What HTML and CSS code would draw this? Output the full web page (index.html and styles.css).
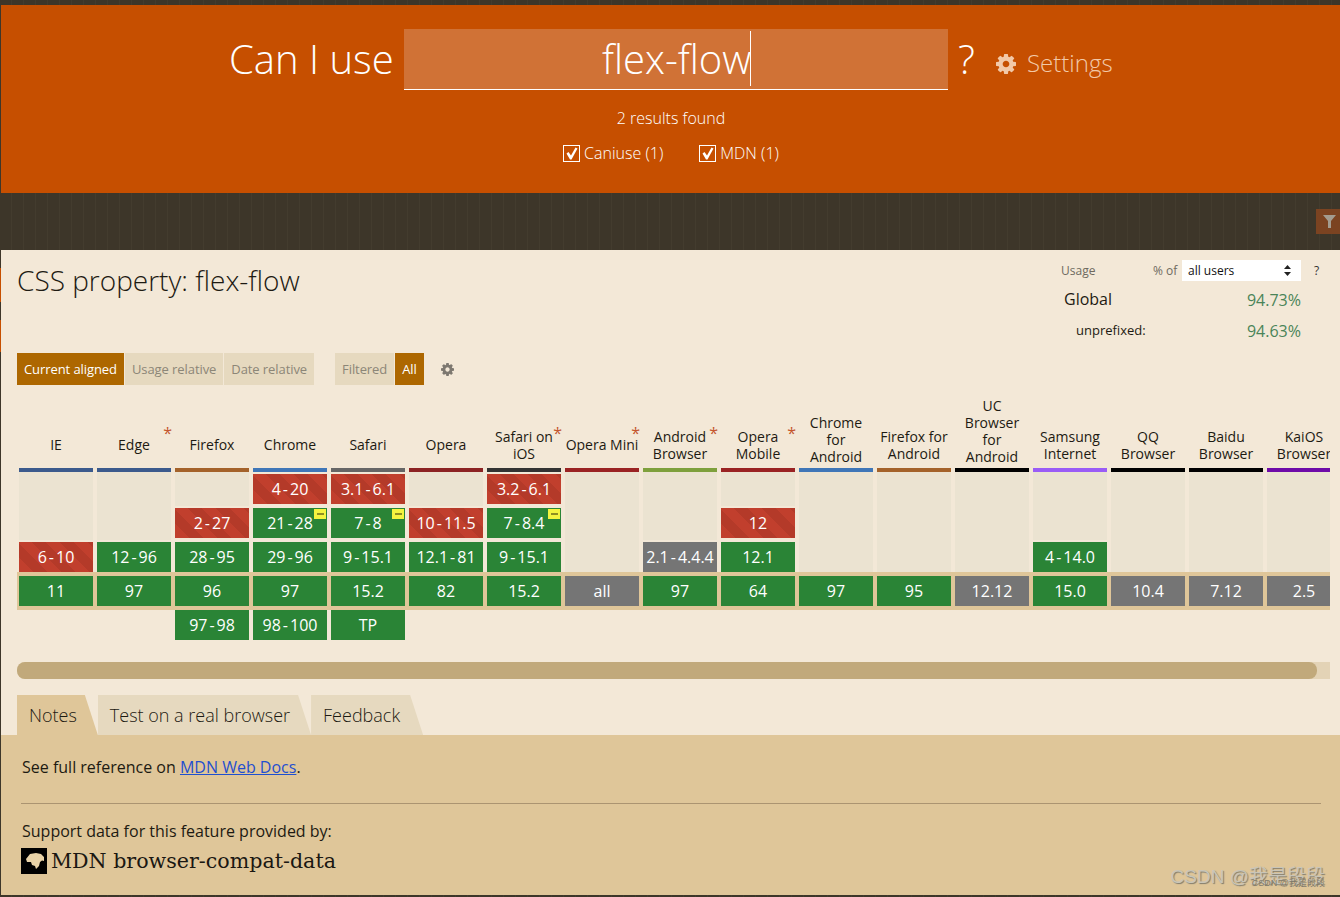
FILE: index.html
```html
<!DOCTYPE html>
<html lang="en">
<head>
<meta charset="utf-8">
<title>Can I use flex-flow</title>
<link rel="stylesheet" href="styles.css">
</head>
<body>
<div class="page">
  <header class="masthead">
    <div class="search-row">
      <h1 class="brand">Can I use</h1>
      <div class="search-box"><span class="search-text">flex-flow</span><span class="caret"></span></div>
      <span class="help">?</span>
      <a class="settings">
        <svg class="gear-lg" viewBox="128 128 1536 1536"><path d="M1152 896q0-106-75-181t-181-75-181 75-75 181 75 181 181 75 181-75 75-181zm512-109v222q0 12-8 23t-20 13l-185 28q-19 54-39 91 35 50 107 138 10 12 10 25t-9 23q-27 37-99 108t-94 71q-12 0-26-9l-138-108q-44 23-91 38-16 136-29 186-7 28-36 28h-222q-14 0-24.500-8.500t-11.500-21.500l-28-184q-49-16-90-37l-141 107q-10 9-25 9-14 0-25-11-126-114-165-168-7-10-7-23 0-12 8-23 15-21 51-66.500t54-70.500q-27-50-41-99l-183-27q-13-2-21-12.500t-8-23.500v-222q0-12 8-23t19-13l186-28q14-46 39-92-40-57-107-138-10-12-10-24 0-10 9-23 26-36 98.500-107.500t94.500-71.500q13 0 26 10l138 107q44-23 91-38 16-136 29-186 7-28 36-28h222q14 0 24.500 8.500t11.500 21.500l28 184q49 16 90 37l142-107q9-9 24-9 13 0 25 10 129 119 165 170 7 8 7 22 0 12-8 23-15 21-51 66.500t-54 70.500q26 50 41 98l183 28q13 2 21 12.500t8 23.500z"/></svg>
        <span class="settings-text">Settings</span>
      </a>
    </div>
    <p class="results">2 results found</p>
    <div class="sources">
      <label class="source"><svg class="check" viewBox="0 0 17 17"><rect x="0.5" y="0.5" width="16" height="16"/><path d="M3.500 8.500l2-1.500 2.500 3.500 4.500-8 2 1-6 11h-1.500z"/></svg>Caniuse (1)</label>
      <label class="source"><svg class="check" viewBox="0 0 17 17"><rect x="0.5" y="0.5" width="16" height="16"/><path d="M3.500 8.500l2-1.500 2.500 3.500 4.500-8 2 1-6 11h-1.500z"/></svg>MDN (1)</label>
    </div>
  </header>

  <div class="filterbar">
    <span class="filter-btn"><svg class="funnel" viewBox="0 0 13 13"><path d="M0 0h13L8 6v7H5V6z"/></svg></span>
  </div>

  <main class="sheet">
    <div class="summary">
      <h2 class="title">CSS property: flex-flow</h2>
      <div class="usage">
        <div class="usage-top">
          <span class="usage-label">Usage</span>
          <span class="usage-of">% of</span>
          <span class="select">all users<svg class="updown" viewBox="0 0 7 11"><path d="M3.500 0l3.500 4H0zM3.500 11L0 7h7z"/></svg></span>
          <span class="usage-help">?</span>
        </div>
        <div class="usage-global"><span class="global-label">Global</span><span class="pct">94.73%</span></div>
        <div class="usage-unpref"><span class="unpref-label">unprefixed:</span><span class="pct">94.63%</span></div>
      </div>
    </div>

    <div class="controls">
      <div class="btn-group">
        <span class="btn on">Current aligned</span>
        <span class="btn">Usage relative</span>
        <span class="btn">Date relative</span>
      </div>
      <div class="btn-group">
        <span class="btn">Filtered</span>
        <span class="btn on">All</span>
      </div>
      <svg class="gear-sm" viewBox="128 128 1536 1536"><path d="M1152 896q0-106-75-181t-181-75-181 75-75 181 75 181 181 75 181-75 75-181zm512-109v222q0 12-8 23t-20 13l-185 28q-19 54-39 91 35 50 107 138 10 12 10 25t-9 23q-27 37-99 108t-94 71q-12 0-26-9l-138-108q-44 23-91 38-16 136-29 186-7 28-36 28h-222q-14 0-24.500-8.500t-11.500-21.500l-28-184q-49-16-90-37l-141 107q-10 9-25 9-14 0-25-11-126-114-165-168-7-10-7-23 0-12 8-23 15-21 51-66.500t54-70.500q-27-50-41-99l-183-27q-13-2-21-12.500t-8-23.500v-222q0-12 8-23t19-13l186-28q14-46 39-92-40-57-107-138-10-12-10-24 0-10 9-23 26-36 98.500-107.500t94.500-71.500q13 0 26 10l138 107q44-23 91-38 16-136 29-186 7-28 36-28h222q14 0 24.500 8.500t11.500 21.500l28 184q49 16 90 37l142-107q9-9 24-9 13 0 25 10 129 119 165 170 7 8 7 22 0 12-8 23-15 21-51 66.500t-54 70.500q26 50 41 98l183 28q13 2 21 12.500t8 23.500z"/></svg>
    </div>

    <div class="table">
      <section class="col">
        <div class="head l1">IE</div><div class="bar ie"></div>
        <div class="stack"><div class="past"></div><div class="cell red">6<i>-</i>10</div></div>
        <div class="cell green cur">11</div>
      </section>
      <section class="col">
        <div class="head l1 star">Edge</div><div class="bar ie"></div>
        <div class="stack"><div class="past"></div><div class="cell green">12<i>-</i>96</div></div>
        <div class="cell green cur">97</div>
      </section>
      <section class="col">
        <div class="head l1">Firefox</div><div class="bar ff"></div>
        <div class="stack"><div class="past"></div><div class="cell red">2<i>-</i>27</div><div class="cell green">28<i>-</i>95</div></div>
        <div class="cell green cur">96</div>
        <div class="cell green">97<i>-</i>98</div>
      </section>
      <section class="col">
        <div class="head l1">Chrome</div><div class="bar cr"></div>
        <div class="stack"><div class="cell red">4<i>-</i>20</div><div class="cell green note">21<i>-</i>28</div><div class="cell green">29<i>-</i>96</div></div>
        <div class="cell green cur">97</div>
        <div class="cell green">98<i>-</i>100</div>
      </section>
      <section class="col">
        <div class="head l1">Safari</div><div class="bar sf"></div>
        <div class="stack"><div class="cell red">3.1<i>-</i>6.1</div><div class="cell green note">7<i>-</i>8</div><div class="cell green">9<i>-</i>15.1</div></div>
        <div class="cell green cur">15.2</div>
        <div class="cell green">TP</div>
      </section>
      <section class="col">
        <div class="head l1">Opera</div><div class="bar op"></div>
        <div class="stack"><div class="past"></div><div class="cell red">10<i>-</i>11.5</div><div class="cell green">12.1<i>-</i>81</div></div>
        <div class="cell green cur">82</div>
      </section>
      <section class="col">
        <div class="head l2 star">Safari on<br>iOS</div><div class="bar ios"></div>
        <div class="stack"><div class="cell red">3.2<i>-</i>6.1</div><div class="cell green note">7<i>-</i>8.4</div><div class="cell green">9<i>-</i>15.1</div></div>
        <div class="cell green cur">15.2</div>
      </section>
      <section class="col">
        <div class="head l1 star">Opera Mini</div><div class="bar op2"></div>
        <div class="stack"><div class="past"></div></div>
        <div class="cell grey cur">all</div>
      </section>
      <section class="col">
        <div class="head l2 star">Android<br>Browser</div><div class="bar an"></div>
        <div class="stack"><div class="past"></div><div class="cell grey">2.1<i>-</i>4.4.4</div></div>
        <div class="cell green cur">97</div>
      </section>
      <section class="col">
        <div class="head l2 star">Opera<br>Mobile</div><div class="bar op2"></div>
        <div class="stack"><div class="past"></div><div class="cell red">12</div><div class="cell green">12.1</div></div>
        <div class="cell green cur">64</div>
      </section>
      <section class="col">
        <div class="head l3">Chrome<br>for<br>Android</div><div class="bar cr"></div>
        <div class="stack"><div class="past"></div></div>
        <div class="cell green cur">97</div>
      </section>
      <section class="col">
        <div class="head l2">Firefox for<br>Android</div><div class="bar ff"></div>
        <div class="stack"><div class="past"></div></div>
        <div class="cell green cur">95</div>
      </section>
      <section class="col">
        <div class="head l3">UC<br>Browser<br>for<br>Android</div><div class="bar bk"></div>
        <div class="stack"><div class="past"></div></div>
        <div class="cell grey cur">12.12</div>
      </section>
      <section class="col">
        <div class="head l2">Samsung<br>Internet</div><div class="bar sm"></div>
        <div class="stack"><div class="past"></div><div class="cell green">4<i>-</i>14.0</div></div>
        <div class="cell green cur">15.0</div>
      </section>
      <section class="col">
        <div class="head l2">QQ<br>Browser</div><div class="bar bk"></div>
        <div class="stack"><div class="past"></div></div>
        <div class="cell grey cur">10.4</div>
      </section>
      <section class="col">
        <div class="head l2">Baidu<br>Browser</div><div class="bar bk"></div>
        <div class="stack"><div class="past"></div></div>
        <div class="cell grey cur">7.12</div>
      </section>
      <section class="col">
        <div class="head l2">KaiOS<br>Browser</div><div class="bar ka"></div>
        <div class="stack"><div class="past"></div></div>
        <div class="cell grey cur">2.5</div>
      </section>
    </div>

    <div class="scroll"><div class="thumb"></div></div>

    <nav class="tabs">
      <span class="tab active">Notes</span>
      <span class="tab">Test on a real browser</span>
      <span class="tab">Feedback</span>
    </nav>

    <div class="panel">
      <p class="ref">See full reference on <a href="#">MDN Web Docs</a>.</p>
      <hr class="rule">
      <p class="support">Support data for this feature provided by:</p>
      <div class="mdn">
        <svg class="mdn-logo" viewBox="0 0 26 26"><rect width="26" height="26"/><path fill="#e9d3a8" d="M5 11l4-5 6-1 5 1 3 3v4l-2-.5-2 1.500-1 4-3 3-1-3-3-1-1-3-4 0z"/></svg>
        <span>MDN browser-compat-data</span>
      </div>
      <div class="watermark">CSDN @我是段段<span class="watermark-sub">CSDN @我是段段</span></div>
    </div>
  </main>
</div>
</body>
</html>
```
FILE: styles.css
```css
* { box-sizing: border-box; }
html, body { margin: 0; padding: 0; }
body {
  height: 897px;
  overflow: hidden;
  background: repeating-linear-gradient(90deg, #3d3629 0 11px, #433c2e 11px 12px);
  font-family: "Open Sans", "Noto Sans CJK SC", sans-serif;
  color: #1d1a12;
}
.page { padding: 5px 0 0 1px; height: 895px; display: flex; flex-direction: column; }

/* masthead */
.masthead { height: 188px; background: #c64f00; color: #fff; flex: none; padding-top: 24px; }
.search-row { display: flex; align-items: flex-start; padding-left: 228px; }
.brand { margin: 0; font-weight: 300; font-size: 40px; line-height: 59px; width: 175px; white-space: nowrap; }
.search-box {
  width: 544px; height: 61px;
  background: #d07236;
  border-bottom: 1px solid #fff;
  display: flex; justify-content: flex-start;
  padding: 2px 0 0 198px;
  font-weight: 300; font-size: 40px; line-height: 56px;
}
.search-text { display: block; height: 56px; }
.caret { width: 1px; height: 55px; background: #fff; margin-left: -1px; }
.help { font-weight: 300; font-size: 40px; line-height: 59px; margin-left: 10px; width: 38px; }
.settings { display: flex; align-items: center; gap: 11px; color: #f2c9a8; font-weight: 300; font-size: 24px; height: 61px; padding-top: 9px; }
.settings-text { margin-top: -4px; }
.gear-lg { width: 20px; height: 20px; fill: #f2c9a8; }
.results { margin: 17px 0 0; text-align: center; font-weight: 300; font-size: 16px; line-height: 22px; padding-left: 1px; }
.sources { display: flex; justify-content: center; gap: 36px; margin-top: 13px; padding-left: 1px; }
.source { display: flex; align-items: center; gap: 4px; font-weight: 300; font-size: 16px; line-height: 22px; }
.check { width: 17px; height: 17px; flex: none; }
.check rect { fill: none; stroke: #fff; }
.check path { fill: #fff; }

/* filter bar */
.filterbar { height: 57px; flex: none; display: flex; justify-content: flex-end; padding-top: 16px; }
.filter-btn { width: 24px; height: 25px; background: #7b4321; display: flex; align-items: center; justify-content: center; padding-left: 2px; }
.funnel { width: 13px; height: 13px; fill: #a39c90; }

/* sheet */
.sheet {
  flex: 1;
  margin-left: -1px;
  padding-left: 1px;
  background:
    linear-gradient(to bottom, #3d3629 0 18px, #c64f00 18px 52px, #3d3629 52px 70px, #c64f00 70px 102px, #3d3629 102px) 0 0 / 1px 100% no-repeat,
    #f3e8d7;
  display: flex; flex-direction: column;
}
.summary { display: flex; justify-content: space-between; height: 103px; flex: none; padding: 9px 0 0 16px; }
.title { margin: 0; font-weight: 300; font-size: 28px; line-height: 42px; color: #1d1a12; }
.usage { width: 279px; padding-top: 1px; }
.usage-top { display: flex; align-items: center; height: 21px; font-size: 12px; color: #6e6a60; }
.usage-label { width: 92px; }
.usage-of { width: 29px; }
.select { width: 119px; height: 21px; background: #fff; color: #111; padding-left: 6px; display: flex; align-items: center; justify-content: space-between; padding-right: 10px; }
.updown { width: 7px; height: 11px; fill: #222; }
.usage-help { margin-left: 13px; color: #333; }
.usage-global { display: flex; justify-content: space-between; width: 240px; padding-left: 3px; margin-top: 8px; font-size: 16px; line-height: 22px; color: #1d1a12; }
.global-label { margin-top: -1px; }
.usage-unpref { display: flex; justify-content: space-between; align-items: center; width: 240px; padding-left: 15px; margin-top: 9px; font-size: 13px; line-height: 22px; color: #1d1a12; }
.unpref-label { margin-top: -2px; }
.pct { color: #4a8458; font-size: 16px; font-weight: 400; }

.controls { display: flex; align-items: center; padding-left: 16px; height: 32px; flex: none; gap: 21px; }
.btn-group { display: flex; gap: 1px; }
.btn { height: 32px; line-height: 32px; padding: 0 7px; font-size: 13px; letter-spacing: -0.08px; background: #e6d9bf; color: #8c8677; }
.btn.on { background: #ad6700; color: #fff; }
.gear-sm { width: 13px; height: 13px; fill: #7d7870; margin-left: -4px; }

/* table */
.table { display: flex; gap: 4px; margin: 11px 0 0 16px; width: 1313px; height: 266px; padding-left: 2px; overflow: hidden; flex: none; }
.col { width: 74px; flex: none; display: flex; flex-direction: column; }
.head { height: 72px; display: flex; flex-direction: column; justify-content: flex-end; align-items: center; position: relative; font-size: 14px; line-height: 17px; text-align: center; white-space: nowrap; color: #1d1a12; }
.head.l1 { padding-bottom: 15px; }
.head.l2 { padding-bottom: 6px; }
.head.l3 { padding-bottom: 3px; }
.head.star::after { content: "*"; position: absolute; right: -1px; top: 29px; font-size: 16px; line-height: 16px; color: #c4552d; }
.bar { height: 4px; flex: none; }
.ie { background: #3b5a8c; }
.ff { background: #a4622a; }
.cr { background: #3f76b7; }
.sf { background: #666; }
.op { background: #8c2323; }
.op2 { background: #9a2323; }
.ios { background: #333; }
.an { background: #7ea03c; }
.bk { background: #000; }
.sm { background: #9a5cf6; }
.ka { background: #6e0ba8; }

.stack { height: 100px; display: flex; flex-direction: column; gap: 4px; flex: none; }
.past { flex: 1; margin-bottom: -2px; background: #ebe3d1; }
.cell { height: 30px; flex: none; line-height: 30px; text-align: center; color: #fff; font-size: 16px; position: relative; white-space: nowrap; }
.stack > .cell:first-child { margin-top: 2px; }
.cell i { font-style: normal; margin: 0 2px; }
.col > .cell { margin-top: 4px; }
.cell.cur { box-shadow: 0 0 0 4px #dfc699; }
.green { background: #2a8436; }
.grey { background: #757575; }
.red { background: repeating-linear-gradient(45deg, #c13f2d 0 10px, #b43a29 10px 20px); }
.note::after { content: ""; position: absolute; right: 1px; top: 1px; width: 12px; height: 10px; background: linear-gradient(#8f8f22, #8f8f22) center / 7px 2px no-repeat, #f4f43f; }

.scroll { margin: 0 0 0 16px; width: 1313px; height: 17px; background: #e3d3b6; border-radius: 8px 0 0 8px; flex: none; }
.thumb { width: 1300px; height: 17px; background: #c1a97b; border-radius: 8px; }

.tabs { display: flex; margin: 16px 0 0 16px; height: 40px; flex: none; }
.tab { height: 40px; line-height: 40px; background: #e6d9bf; font-size: 18px; font-weight: 300; color: #1d1a12; padding: 0 21px 0 12px; clip-path: polygon(0 0, calc(100% - 13px) 0, 100% 100%, 0 100%); }
.tab:last-child { padding-right: 23px; }
.tab.active { background: #dfc699; }

.panel { flex: 1; background: #dfc699; padding: 20px 19px 0 20px; position: relative; font-size: 16px; color: #1d1a12; }
.ref { margin: 0; padding-left: 1px; line-height: 24px; }
.ref a { color: #1f4fd0; text-decoration: underline; }
.rule { margin: 24px 0 0; border: 0; height: 1px; background: #ab9471; }
.support { margin: 15px 0 0; padding-left: 1px; line-height: 24px; }
.mdn { display: flex; align-items: center; gap: 4px; margin-top: 5px; font-family: "DejaVu Serif", "Liberation Serif", serif; font-size: 20.6px; line-height: 26px; color: #1a1712; }
.mdn-logo { width: 26px; height: 26px; flex: none; }
.watermark { position: absolute; right: 15px; bottom: 6px; font-family: "Liberation Sans", "Noto Sans CJK SC", sans-serif; font-size: 19px; line-height: 24px; color: #c9c5b8; text-shadow: 1px 1px 1px #7f7a6c; }
.watermark-sub { position: absolute; right: 0; bottom: 0; font-size: 9px; line-height: 12px; color: #7f7a6c; white-space: nowrap; text-shadow: none; }
```
